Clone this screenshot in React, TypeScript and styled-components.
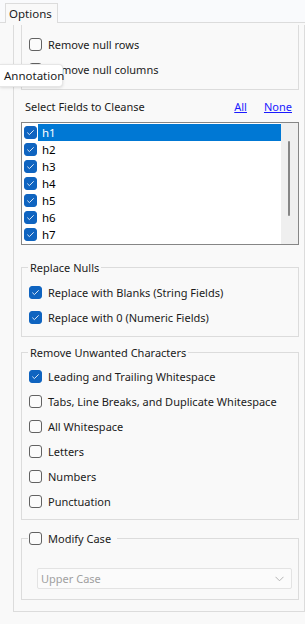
import React from 'react'
import styled, { createGlobalStyle } from 'styled-components'

const GlobalStyle = createGlobalStyle`
  html, body {
    margin: 0;
    padding: 0;
  }
  body {
    background: #f9f9f9;
    font-family: 'Noto Sans', 'Segoe UI', sans-serif;
    font-size: 11px;
    color: #1b1b1b;
  }
`

const Window = styled.div`
  position: relative;
  width: 305px;
  height: 624px;
  overflow: hidden;
  display: flex;
  flex-direction: column;
`

const TabStrip = styled.div`
  height: 22px;
  flex-shrink: 0;
  display: flex;
  align-items: flex-end;
  padding-left: 5px;
  background: #f9fafc;
  border-bottom: 1px solid #dcdcdc;
`

const Tab = styled.div`
  width: 53px;
  height: 20px;
  box-sizing: border-box;
  margin-bottom: -1px;
  padding-left: 3px;
  display: flex;
  align-items: center;
  background: #f9f9f9;
  border: 1px solid #dcdcdc;
  border-bottom: none;
  font-size: 11.5px;
  color: #1b1b1b;
`

const Panel = styled.div`
  flex: 1;
  min-height: 0;
  padding-top: 2px;
  display: flex;
  flex-direction: column;
`

const Viewport = styled.div`
  flex: 1;
  overflow: hidden;
`

// content is scrolled down a little, so the frame's top edge sits above the viewport
const Frame = styled.div`
  margin-top: -20px;
  margin-left: 13px;
  width: 292px;
  box-sizing: border-box;
  border: 1px solid #dcdcdc;
  padding: 8px 5px 11px 7px;
  display: flex;
  flex-direction: column;
`

const GroupBox = styled.fieldset<{ $top?: number; $bottom?: number; $gap?: number }>`
  margin: ${p => p.$gap ?? 0}px 0 0 0;
  min-width: 0;
  padding: ${p => p.$top ?? 0}px 6px ${p => p.$bottom ?? 0}px 7px;
  border: 1px solid #dcdcdc;
  display: flex;
  flex-direction: column;
`

const Legend = styled.legend<{ $withBox?: boolean }>`
  margin-left: -1px;
  padding: ${p => (p.$withBox ? '0 6px 0 1px' : '0 2px')};
  height: 15px;
  line-height: 15px;
  display: flex;
  align-items: center;
  gap: 6px;
  color: #1b1b1b;
`

const CheckRow = styled.label`
  height: 25px;
  display: flex;
  align-items: center;
  gap: 6px;
  color: #1b1b1b;
  white-space: nowrap;
`

const Box = styled.span<{ $checked?: boolean }>`
  width: 13px;
  height: 13px;
  flex-shrink: 0;
  box-sizing: border-box;
  border-radius: 3px;
  display: flex;
  align-items: center;
  justify-content: center;
  border: 1px solid ${p => (p.$checked ? '#0f64c0' : '#626262')};
  background: ${p => (p.$checked ? '#0f64c0' : '#fbfbfb')};
`

const FieldsHeader = styled.div`
  margin: 8px 0;
  height: 16px;
  padding: 0 7px 0 4px;
  display: flex;
  align-items: center;
  justify-content: space-between;
`

const Links = styled.div`
  display: flex;
  gap: 17px;
`

const Link = styled.a`
  color: #1a1aff;
  text-decoration: underline;
  cursor: pointer;
`

const ListBox = styled.div`
  height: 123px;
  box-sizing: border-box;
  border: 1px solid #868686;
  background: #ffffff;
  display: flex;
  overflow: hidden;
`

const ListItems = styled.div`
  flex: 1;
  padding: 1px 0 0 2px;
  overflow: hidden;
`

const ListRow = styled.div`
  height: 17px;
  display: flex;
  align-items: center;
`

const RowText = styled.span<{ $selected?: boolean }>`
  flex: 1;
  height: 17px;
  margin-left: 1px;
  padding-left: 4px;
  display: flex;
  align-items: center;
  font-size: 11.5px;
  background: ${p => (p.$selected ? '#0078d4' : 'transparent')};
  color: ${p => (p.$selected ? '#ffffff' : '#000000')};
`

const ScrollTrack = styled.div`
  width: 17px;
  flex-shrink: 0;
  background: #efefef;
`

const ScrollThumb = styled.div`
  width: 2px;
  height: 75px;
  margin: 18px 0 0 7px;
  border-radius: 1px;
  background: #868686;
`

const Select = styled.div`
  margin: 0 0 0 8px;
  height: 21px;
  box-sizing: border-box;
  padding: 0 7px 0 3px;
  border: 1px solid #e3e3e3;
  border-radius: 2px;
  background: #fbfbfb;
  display: flex;
  align-items: center;
  justify-content: space-between;
  color: #a0a0a0;
`

const Tooltip = styled.div`
  position: absolute;
  left: 0;
  top: 64px;
  width: 63px;
  height: 23px;
  box-sizing: border-box;
  padding-left: 4px;
  display: flex;
  align-items: center;
  background: #ffffff;
  border: 1px solid #e6e6e6;
  border-left: none;
  border-radius: 0 4px 4px 0;
  box-shadow: 0 1px 3px rgba(0, 0, 0, 0.12);
  font-size: 11.5px;
  color: #1b1b1b;
`

const Check: React.FC<{ checked?: boolean }> = ({ checked }) => (
  <Box $checked={checked}>
    {checked && (
      <svg width="9" height="9" viewBox="0 0 9 9">
        <polyline points="1.3,4.6 3.4,6.6 7.7,2.3" fill="none" stroke="#dbe8f7" strokeWidth="1" />
      </svg>
    )}
  </Box>
)

const Option: React.FC<{ label: string; checked?: boolean }> = ({ label, checked }) => (
  <CheckRow>
    <Check checked={checked} />
    {label}
  </CheckRow>
)

const fields = ['h1', 'h2', 'h3', 'h4', 'h5', 'h6', 'h7', 'h8', 'h9', 'h10']

const unwanted = [
  { label: 'Leading and Trailing Whitespace', checked: true },
  { label: 'Tabs, Line Breaks, and Duplicate Whitespace' },
  { label: 'All Whitespace' },
  { label: 'Letters' },
  { label: 'Numbers' },
  { label: 'Punctuation' },
]

export default function App() {
  return (
    <>
      <GlobalStyle />
      <Window>
        <TabStrip>
          <Tab>Options</Tab>
        </TabStrip>
        <Panel>
          <Viewport>
            <Frame>
              <GroupBox $top={17} $bottom={7}>
                <Option label="Remove null rows" />
                <Option label="Remove null columns" />
              </GroupBox>

              <FieldsHeader>
                <span>Select Fields to Cleanse</span>
                <Links>
                  <Link>All</Link>
                  <Link>None</Link>
                </Links>
              </FieldsHeader>

              <ListBox>
                <ListItems>
                  {fields.map((f, i) => (
                    <ListRow key={f}>
                      <Check checked />
                      <RowText $selected={i === 0}>{f}</RowText>
                    </ListRow>
                  ))}
                </ListItems>
                <ScrollTrack>
                  <ScrollThumb />
                </ScrollTrack>
              </ListBox>

              <GroupBox $gap={15} $top={5} $bottom={6}>
                <Legend>Replace Nulls</Legend>
                <Option label="Replace with Blanks (String Fields)" checked />
                <Option label="Replace with 0 (Numeric Fields)" checked />
              </GroupBox>

              <GroupBox $gap={8} $top={4} $bottom={5}>
                <Legend>Remove Unwanted Characters</Legend>
                {unwanted.map(u => (
                  <Option key={u.label} label={u.label} checked={u.checked} />
                ))}
              </GroupBox>

              <GroupBox $gap={11} $top={22} $bottom={10}>
                <Legend $withBox>
                  <Check />
                  Modify Case
                </Legend>
                <Select>
                  <span>Upper Case</span>
                  <svg width="9" height="6" viewBox="0 0 9 6">
                    <polyline points="0.5,0.8 4.5,4.8 8.5,0.8" fill="none" stroke="#b4b4b4" strokeWidth="1" />
                  </svg>
                </Select>
              </GroupBox>
            </Frame>
          </Viewport>
        </Panel>
        <Tooltip>Annotation</Tooltip>
      </Window>
    </>
  )
}
